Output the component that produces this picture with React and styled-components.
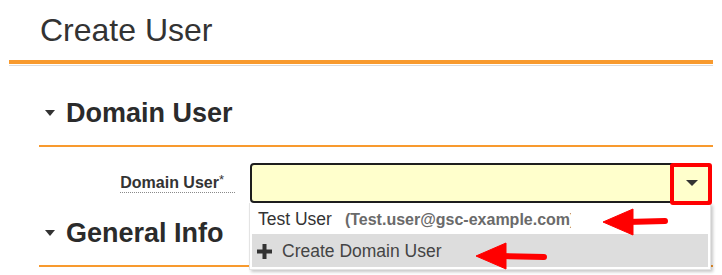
import React from 'react'
import styled, { createGlobalStyle } from 'styled-components'

const GlobalStyle = createGlobalStyle`
  html, body {
    margin: 0;
    padding: 0;
    background: #fff;
  }
  body {
    font-family: "Liberation Sans", Arial, sans-serif;
    color: #333;
  }
`

const Screen = styled.div`
  position: relative;
  width: 722px;
  height: 275px;
  overflow: hidden;
`

const Page = styled.div`
  margin-left: 9px;
  width: 704px;
`

const TitleWrap = styled.div`
  padding-top: 10px;
  padding-bottom: 1px;
  border-bottom: 1px solid #dcdcdc;
`

const Title = styled.h1`
  margin: 0;
  padding: 0 0 10px 31px;
  font-size: 32px;
  font-weight: 400;
  line-height: 40px;
  color: #333;
  border-bottom: 4px solid #f89a2e;
`

const Section = styled.div`
  padding-left: 30px;
`

const SectionHead = styled.h2`
  display: flex;
  align-items: center;
  margin: ${p => p.$top}px 0 0;
  padding-bottom: 16px;
  font-size: 27px;
  font-weight: 700;
  line-height: 32px;
  color: #2b2b2b;
  border-bottom: 2px solid #f89a2e;
`

const Caret = styled.span`
  width: 0;
  height: 0;
  margin: 0 11px 0 6px;
  border-left: 5.5px solid transparent;
  border-right: 5.5px solid transparent;
  border-top: 6px solid #333;
`

const FormRow = styled.div`
  display: grid;
  grid-template-columns: 196px 461px;
  column-gap: 15px;
  align-items: center;
  margin-top: 16px;
`

const Label = styled.label`
  justify-self: end;
  padding-right: 11px;
  font-size: 16px;
  font-weight: 700;
  line-height: 19px;
  color: #333;
  border-bottom: 1px dotted #8a8a8a;

  sup {
    font-size: 13px;
    font-weight: 400;
    vertical-align: 4px;
    line-height: 0;
  }
`

const SelectWrap = styled.div`
  position: relative;
  height: 40px;
`

const SelectBox = styled.div`
  box-sizing: border-box;
  display: flex;
  align-items: center;
  justify-content: flex-end;
  height: 40px;
  padding-right: 11px;
  background: #ffffcc;
  border: 2px solid #1e1e1e;
  border-radius: 4px;
`

const DownArrow = styled.span`
  width: 0;
  height: 0;
  border-left: 6px solid transparent;
  border-right: 6px solid transparent;
  border-top: 6px solid #333;
`

const Highlight = styled.div`
  position: absolute;
  top: 0;
  right: -1px;
  box-sizing: border-box;
  width: 42px;
  height: 42px;
  border: 4px solid #ff0000;
  border-radius: 3px;
  pointer-events: none;
  z-index: 3;
`

const Menu = styled.div`
  position: absolute;
  top: 40px;
  left: -1px;
  box-sizing: border-box;
  width: 462px;
  padding: 0 2px 2px;
  background: #fff;
  border: 1px solid #e4e4e4;
  border-top: none;
  box-shadow: 2px 2px 3px rgba(0, 0, 0, 0.22);
  z-index: 2;
`

const Option = styled.div`
  display: flex;
  align-items: center;
  height: ${p => p.$h}px;
  padding: 2px 0 0 ${p => p.$pad}px;
  box-sizing: border-box;
  background: ${p => (p.$active ? '#dddddd' : '#fff')};
  font-size: 17.5px;
  color: ${p => (p.$active ? '#444' : '#333')};
  white-space: nowrap;
`

const Email = styled.span`
  display: inline-block;
  max-width: 226px;
  margin-left: 13px;
  overflow: hidden;
  font-size: 16px;
  font-weight: 700;
  color: #6a6a6a;
`

const PlusIcon = styled.svg`
  flex: none;
  margin-right: 10px;
`

const Annotations = styled.svg`
  position: absolute;
  left: 0;
  top: 0;
  pointer-events: none;
  z-index: 5;
`

const Arrow = ({ tipX, tipY, tailX, tailY }) => (
  <g fill="#ff0000" stroke="#ff0000" strokeLinejoin="round">
    <line x1={tipX + 24} y1={tipY} x2={tailX} y2={tailY} strokeWidth="6" strokeLinecap="round" />
    <polygon points={`${tipX},${tipY} ${tipX + 30},${tipY - 13} ${tipX + 30},${tipY + 13}`} strokeWidth="1" />
  </g>
)

const App = () => {
  return (
    <Screen>
      <GlobalStyle />
      <Page>
        <TitleWrap>
          <Title>Create User</Title>
        </TitleWrap>
        <Section>
          <SectionHead $top={31}>
            <Caret />
            Domain User
          </SectionHead>
          <FormRow>
            <Label>
              Domain User<sup>*</sup>
            </Label>
            <SelectWrap>
              <SelectBox>
                <DownArrow />
              </SelectBox>
              <Highlight />
              <Menu>
                <Option $h={31} $pad={6}>
                  Test User
                  <Email>(Test.user@gsc-example.com)</Email>
                </Option>
                <Option $h={33} $pad={5} $active>
                  <PlusIcon width="15" height="15" viewBox="0 0 15 15">
                    <rect x="5.5" y="0" width="4" height="15" fill="#333" />
                    <rect x="0" y="5.5" width="15" height="4" fill="#333" />
                  </PlusIcon>
                  Create Domain User
                </Option>
              </Menu>
            </SelectWrap>
          </FormRow>
          <SectionHead $top={14}>
            <Caret />
            General Info
          </SectionHead>
        </Section>
      </Page>
      <Annotations width="722" height="275" viewBox="0 0 722 275">
        <Arrow tipX={603} tipY={222} tailX={665} tailY={221} />
        <Arrow tipX={476} tipY={256} tailX={544} tailY={257} />
      </Annotations>
    </Screen>
  )
}

export default App
